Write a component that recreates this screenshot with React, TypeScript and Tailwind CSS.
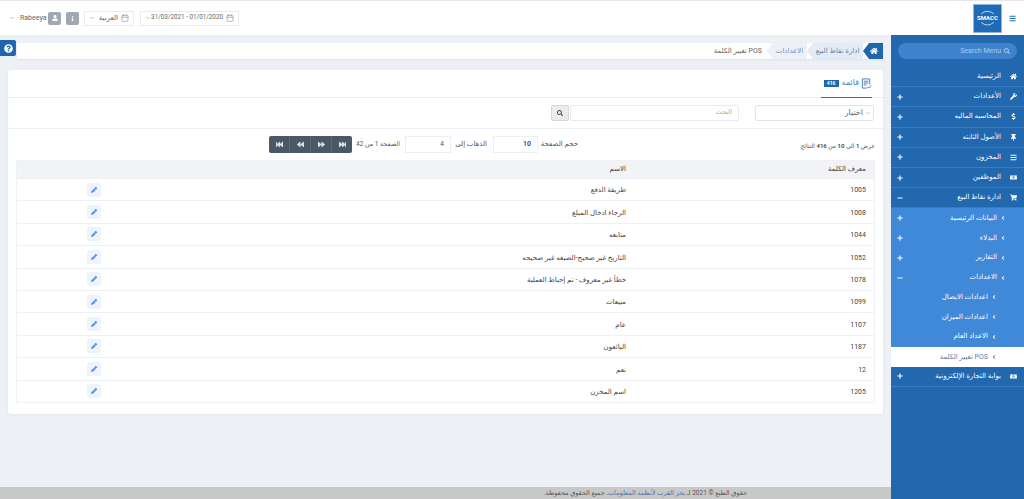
import type { ReactNode } from "react";
import { Calendar, ChevronDown } from "lucide-react";
import {
  FaAngleLeft,
  FaBackward,
  FaBars,
  FaDollarSign,
  FaFastBackward,
  FaFastForward,
  FaForward,
  FaHome,
  FaInfo,
  FaMinus,
  FaMoneyBillAlt,
  FaPencilAlt,
  FaPlus,
  FaQuestionCircle,
  FaSearch,
  FaShoppingCart,
  FaThumbtack,
  FaUser,
  FaWrench,
} from "react-icons/fa";

const rows = [
  ["1005", "طريقة الدفع"],
  ["1008", "الرجاء ادخال المبلغ"],
  ["1044", "متابعه"],
  ["1052", "التاريخ غير صحيح-الصيغه غير صحيحه"],
  ["1078", "خطأ غير معروف - تم إحباط العملية"],
  ["1099", "مبيعات"],
  ["1107", "عام"],
  ["1187", "البائعون"],
  ["12", "نعم"],
  ["1205", "اسم المخزن"],
];

function MainItem({ icon, label, sign }: { icon: ReactNode; label: string; sign?: "plus" | "minus" }) {
  return (
    <div className="flex h-[20.2px] items-center border-b border-[#3b7cc0] bg-[#2168ae] pl-[6px] pr-[7px] text-white">
      {sign === "plus" && <FaPlus className="text-[6px]" />}
      {sign === "minus" && <FaMinus className="text-[6px]" />}
      <span className="ml-auto text-[7px] leading-none">{label}</span>
      <span className="ml-[8px] flex w-[8px] justify-center text-[7px]">{icon}</span>
    </div>
  );
}

function SubItem({ label, sign, deep }: { label: string; sign?: "plus" | "minus"; deep?: boolean }) {
  return (
    <div className={`flex h-[19.8px] items-center bg-[#4088d8] pl-[6px] text-white ${deep ? "pr-[27px]" : "pr-[18px]"}`}>
      {sign === "plus" && <FaPlus className="text-[6px]" />}
      {sign === "minus" && <FaMinus className="text-[6px]" />}
      <span className="ml-auto text-[7px] leading-none">{label}</span>
      <FaAngleLeft className="ml-[3px] text-[6px]" />
    </div>
  );
}

function Sidebar() {
  return (
    <aside className="flex w-[133px] shrink-0 flex-col bg-[#2168ae]">
      <div className="px-[7px] pt-[8px] pb-[8px]">
        <div className="flex h-[16px] items-center justify-end gap-[3px] rounded-full bg-[#3f82cd] pr-[7px] text-[7px] text-[#a9cbef]">
          Search Menu
          <FaSearch className="text-[6px]" />
        </div>
      </div>
      <MainItem icon={<FaHome />} label="الرئيسية" />
      <MainItem icon={<FaWrench />} label="الأعدادات" sign="plus" />
      <MainItem icon={<FaDollarSign />} label="المحاسبه الماليه" sign="plus" />
      <MainItem icon={<FaThumbtack />} label="الأصول الثابته" sign="plus" />
      <MainItem icon={<FaBars />} label="المخزون" sign="plus" />
      <MainItem icon={<FaMoneyBillAlt />} label="الموظفين" sign="plus" />
      <MainItem icon={<FaShoppingCart />} label="ادارة نقاط البيع" sign="minus" />
      <SubItem label="البيانات الرئيسية" sign="plus" />
      <SubItem label="البدلاء" sign="plus" />
      <SubItem label="التقارير" sign="plus" />
      <SubItem label="الاعدادات" sign="minus" />
      <SubItem label="اعدادات الايصال" deep />
      <SubItem label="اعدادات الميزان" deep />
      <SubItem label="الاعداد العام" deep />
      <div className="flex h-[20px] items-center justify-end gap-[3px] bg-white pr-[27px] text-[7px] text-[#5b7fa6]">
        <span dir="rtl">POS تغيير الكلمة</span>
        <FaAngleLeft className="text-[6px]" />
      </div>
      <MainItem icon={<FaMoneyBillAlt />} label="بوابة التجارة الإلكترونية" sign="plus" />
    </aside>
  );
}

function Header() {
  return (
    <header className="flex h-[35px] shrink-0 items-center border-t border-[#e5e7eb] bg-white text-[7px] text-[#666]">
      <ChevronDown className="ml-[9px] h-[6px] w-[6px] shrink-0 text-[#888]" />
      <span className="ml-[5px] w-[25px] whitespace-nowrap">Rabeeya</span>
      <span className="ml-[3px] flex h-[13px] w-[13px] items-center justify-center rounded-[2px] bg-[#a0a8b5] text-[6px] text-white">
        <FaUser />
      </span>
      <span className="ml-[5px] flex h-[13px] w-[13px] items-center justify-center rounded-[2px] bg-[#a0a8b5] text-[5px] text-white">
        <FaInfo />
      </span>
      <div className="ml-[5px] flex h-[15px] w-[50px] items-center border border-[#e8eaee] px-[4px]">
        <ChevronDown className="h-[6px] w-[6px] shrink-0 text-[#888]" />
        <span className="ml-auto">العربية</span>
        <Calendar className="ml-[3px] h-[8px] w-[8px] shrink-0 text-[#999]" />
      </div>
      <div className="ml-[6px] flex h-[15px] w-[99px] items-center border border-[#e8eaee] px-[4px]">
        <ChevronDown className="h-[6px] w-[6px] shrink-0 text-[#888]" />
        <span className="ml-auto text-[6.3px] whitespace-nowrap">31/03/2021 - 01/01/2020</span>
        <Calendar className="ml-[3px] h-[8px] w-[8px] shrink-0 text-[#999]" />
      </div>
      <div className="ml-auto flex h-[29px] w-[29px] flex-col items-center justify-center border border-[#8fb5dc] bg-[#1f6bb5] text-[6px] font-bold leading-none text-white">
        <svg viewBox="0 0 24 6" className="w-[17px]">
          <path d="M3 5.5 Q12 -2 21 5.5" fill="none" stroke="white" strokeWidth="1" />
        </svg>
        <span className="my-[1px]">SMACC</span>
        <svg viewBox="0 0 24 6" className="w-[17px]">
          <path d="M3 0.5 Q12 8 21 0.5" fill="none" stroke="white" strokeWidth="1" />
        </svg>
      </div>
      <FaBars className="ml-[7px] mr-[8px] text-[7px] text-[#2168ae]" />
    </header>
  );
}

function Breadcrumb() {
  return (
    <div className="relative mt-[8px] ml-[17px] mr-[8px] flex h-[16px] items-center justify-end rounded-r-[2px] bg-white text-[7px] shadow-[0_1px_2px_#dfe3ea]">
      <span dir="rtl" className="mr-[5px] text-[#666]">POS تغيير الكلمة</span>
      <span className="flex h-full w-[40px] items-center justify-center bg-[#edf1f7] pl-[5px] text-[#6f8fb3] [clip-path:polygon(0_50%,6px_0,100%_0,100%_100%,6px_100%)]">
        الاعدادات
      </span>
      <span className="flex h-full w-[56px] items-center justify-center bg-[#e3ebf5] pl-[5px] text-[#5f83ab] [clip-path:polygon(0_50%,6px_0,100%_0,100%_100%,6px_100%)]">
        ادارة نقاط البيع
      </span>
      <span className="flex h-full w-[20px] items-center justify-end bg-[#1f66ad] pr-[5px] text-[8px] text-white [clip-path:polygon(0_50%,6px_0,100%_0,100%_100%,6px_100%)]">
        <FaHome />
      </span>
    </div>
  );
}

function Controls() {
  return (
    <div dir="rtl" className="flex h-[31px] items-center px-[8px] text-[7px] text-[#555]">
      <span className="w-[297px] pt-[2px] text-[6px]">
        عرض <b>1</b> الى <b>10</b> من <b>416</b> النتائج
      </span>
      <span className="w-[40px] whitespace-nowrap">حجم الصفحة</span>
      <span className="flex h-[17px] w-[45px] items-center border border-[#eceef2] pr-[6px] font-bold">10</span>
      <span className="mr-[6px] w-[36px] whitespace-nowrap">الذهاب إلى</span>
      <span className="flex h-[17px] w-[46px] items-center border border-[#eceef2] pr-[6px]">4</span>
      <span className="mr-[5px] w-[46px] text-[6.4px] whitespace-nowrap">الصفحة 1 من 42</span>
      <div className="mr-[2px] flex h-[17px] w-[83px] items-center rounded-[2px] bg-[#4b5967] text-[7px] text-[#dfe4ea]">
        <span className="flex h-full flex-1 items-center justify-center"><FaFastForward /></span>
        <span className="flex h-full flex-1 items-center justify-center border-r border-[#5c6a78]"><FaForward /></span>
        <span className="flex h-full flex-1 items-center justify-center border-r border-[#5c6a78]"><FaBackward /></span>
        <span className="flex h-full flex-1 items-center justify-center border-r border-[#5c6a78]"><FaFastBackward /></span>
      </div>
    </div>
  );
}

function Table() {
  return (
    <div dir="rtl" className="mx-[8px] text-[7px] text-[#444]">
      <div className="flex h-[19px] items-center border border-[#eef0f3] bg-[#f1f3f6]">
        <span className="w-[248px] pr-[8px]">معرف الكلمة</span>
        <span>الاسم</span>
      </div>
      {rows.map(([id, name]) => (
        <div key={id} className="flex h-[22.4px] items-center border-x border-b border-[#f0f1f4]">
          <span className="w-[248px] pt-[2px] pr-[8px]">{id}</span>
          <span className="min-w-0 flex-1 pt-[2px]">{name}</span>
          <span className="ml-[70px] flex h-[14px] w-[14px] items-center justify-center rounded-[2px] bg-[#eef4fc] text-[6px] text-[#3b82e6]">
            <FaPencilAlt />
          </span>
        </div>
      ))}
    </div>
  );
}

function Card() {
  return (
    <section className="mt-[11px] ml-[8px] mr-[8px] h-[344px] rounded-[3px] bg-white shadow-[0_1px_3px_#e2e5eb]">
      <div dir="rtl" className="flex h-[28px] border-b border-[#e8eaee] pr-[11px]">
        <div className="mb-[-1px] flex w-[51px] items-center border-b border-[#2f6fb1] pb-[1px]">
          <svg viewBox="0 0 12 12" className="h-[11px] w-[11px] shrink-0" fill="none" stroke="#3f75ad" strokeWidth="1">
            <path d="M9.5 7V1H1.5v10h5" />
            <path d="M3 3.5h5M3 5.5h5M3 7.5h3" />
            <path d="M7 9.5l1.5 1.5L11 8" />
          </svg>
          <span className="mr-[2px] text-[8px] text-[#4f7fb0]">قائمة</span>
          <span className="mr-[3px] h-[7px] w-[15px] bg-[#1f66ad] text-center text-[5px] leading-[7px] font-bold text-white">416</span>
        </div>
      </div>
      <div dir="rtl" className="flex h-[31px] items-center border-b border-[#eef0f3] pb-[1px] pr-[9px] text-[8px]">
        <div className="flex h-[16px] w-[119px] items-center gap-[2px] rounded-[2px] border border-[#e2e4e9] px-[2px] text-[#666]">
          <ChevronDown className="h-[6px] w-[6px] text-[#999]" />
          <span>اختيار</span>
        </div>
        <div className="mr-[16px] flex h-[16px] w-[169px] items-center rounded-[2px] border border-[#e8eaee] px-[6px] text-[6.5px] text-[#aaa]">البحث</div>
        <div className="mr-[1px] flex h-[16px] w-[18px] items-center justify-center rounded-[2px] border border-[#d5d7dc] bg-[#ececec] text-[6px] text-[#444]">
          <FaSearch />
        </div>
      </div>
      <Controls />
      <Table />
    </section>
  );
}

export default function App() {
  return (
    <div className="flex h-[499px] w-[1024px] flex-col overflow-hidden bg-[#edf0f5] font-['Roboto','DejaVu_Sans',sans-serif]">
      <Header />
      <div className="flex min-h-0 flex-1">
        <main className="relative flex min-w-0 flex-1 flex-col">
          <span className="absolute top-[5px] left-0 flex h-[16px] w-[16px] items-center justify-center rounded-r-[2px] bg-[#1f66ad] text-[9px] text-white">
            <FaQuestionCircle />
          </span>
          <Breadcrumb />
          <Card />
          <footer dir="rtl" className="mt-auto h-[12px] bg-[#c8c8c8] pr-[144px] text-[6.5px] leading-[12px] text-[#555]">
            حقوق الطبع © 2021 لـ <span className="text-[#4a74a8]">بحر القرب لأنظمة المعلومات</span>. جميع الحقوق محفوظة.
          </footer>
        </main>
        <Sidebar />
      </div>
    </div>
  );
}
